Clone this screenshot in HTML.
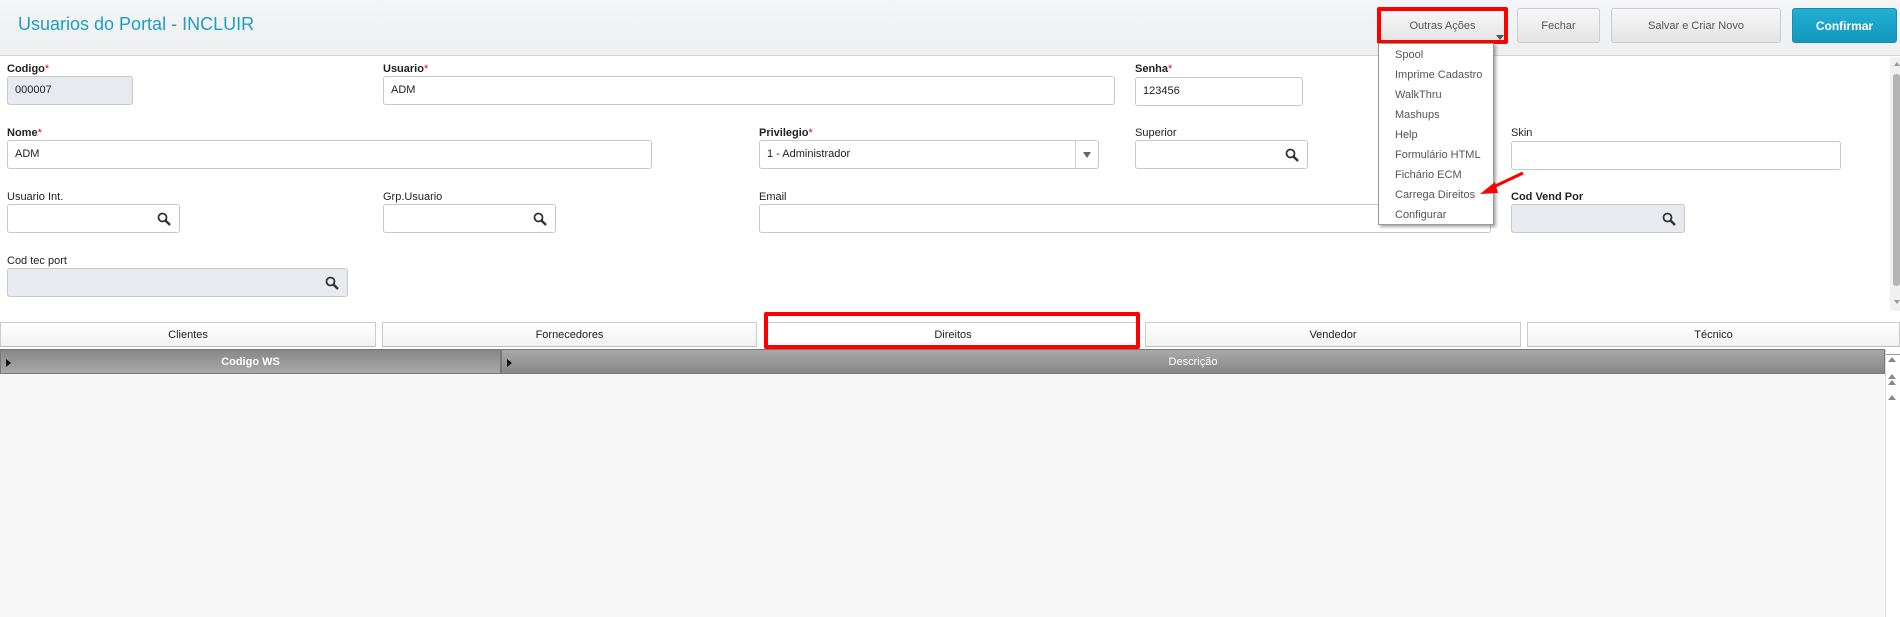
<!DOCTYPE html>
<html><head><meta charset="utf-8"><style>
*{box-sizing:border-box;margin:0;padding:0}
body{width:1900px;height:617px;overflow:hidden;background:#fff;font-family:"Liberation Sans",Arial,sans-serif;font-size:11px;color:#222;position:relative}
.a{position:absolute}
.hdr{left:0;top:0;width:1900px;height:56px;background:linear-gradient(#f4f5f6,#eeeff0);border-bottom:1px solid #d5d5d5}
.title{left:18px;top:14px;font-size:18px;color:#1b9ec4}
.btn{top:8px;height:35px;border:1px solid #ccc;border-radius:3px;background:linear-gradient(#f7f7f7,#e4e4e4);color:#555;font-size:11px;display:flex;align-items:center;justify-content:center}
.lbl{font-size:11px;color:#222}
.lbl b{font-weight:bold}
.lbl i{color:#e00;font-style:normal}
.in{height:29px;border:1px solid #c8c8c8;border-radius:3px;background:#fff;padding-left:7px;line-height:27px;font-size:11px}
.dis{background:#e8eaf0}
.srch{position:absolute;right:8px;top:7px;width:14px;height:14px}
.menu{left:1378px;top:43px;width:116px;height:182px;background:#fff;border:1px solid #999;box-shadow:2px 2px 3px rgba(0,0,0,.35)}
.menu div{position:absolute;left:16px;font-size:11px;color:#555}
.tab{top:322px;height:25px;border:1px solid #ccc;border-bottom-color:#bbb;background:linear-gradient(#fff,#f2f2f2);text-align:center;line-height:24px;font-size:11px;color:#222}
.gh{top:349px;height:25px;color:#fff;font-size:11px;line-height:25px;text-align:center;border:1px solid #777}
.tri{position:absolute;left:5px;top:9px;width:0;height:0;border-left:5px solid #111;border-top:4px solid transparent;border-bottom:4px solid transparent}
</style></head><body>
<div class="a hdr"></div>
<div class="a title">Usuarios do Portal - INCLUIR</div>
<div class="a btn" style="left:1379px;width:127px">Outras Ações</div>
<div class="a" style="left:1496px;top:35px;width:0;height:0;border-left:4px solid transparent;border-right:4px solid transparent;border-top:5px solid #555"></div>
<div class="a" style="left:1377px;top:7px;width:131px;height:37px;border:4px solid #f00;border-radius:2px"></div>
<div class="a btn" style="left:1517px;width:83px">Fechar</div>
<div class="a btn" style="left:1611px;width:170px">Salvar e Criar Novo</div>
<div class="a btn" style="left:1792px;width:105px;background:linear-gradient(#22aed4,#1597bd);border-color:#1590b5;color:#fff;font-weight:bold;font-size:12px">Confirmar</div>

<div class="a lbl" style="left:7px;top:63px"><b>Codigo</b><i>*</i></div>
<div class="a in dis" style="left:7px;top:76px;width:126px">000007</div>
<div class="a lbl" style="left:383px;top:63px"><b>Usuario</b><i>*</i></div>
<div class="a in" style="left:383px;top:76px;width:732px">ADM</div>
<div class="a lbl" style="left:1135px;top:63px"><b>Senha</b><i>*</i></div>
<div class="a in" style="left:1135px;top:77px;width:168px">123456</div>

<div class="a lbl" style="left:7px;top:127px"><b>Nome</b><i>*</i></div>
<div class="a in" style="left:7px;top:140px;width:645px">ADM</div>
<div class="a lbl" style="left:759px;top:127px"><b>Privilegio</b><i>*</i></div>
<div class="a in" style="left:759px;top:140px;width:340px">1 - Administrador<div style="position:absolute;right:0;top:0;width:23px;height:27px;border-left:1px solid #ccc"><div style="position:absolute;left:7px;top:11px;border-left:4px solid transparent;border-right:4px solid transparent;border-top:6px solid #666"></div></div></div>
<div class="a lbl" style="left:1135px;top:127px">Superior</div>
<div class="a in" style="left:1135px;top:140px;width:173px"><svg class="srch" viewBox="0 0 14 14"><circle cx="5.5" cy="5.5" r="4" fill="none" stroke="#333" stroke-width="1.8"/><path d="M8.5 8.5L13 13" stroke="#333" stroke-width="2.4"/></svg></div>
<div class="a lbl" style="left:1511px;top:127px">Skin</div>
<div class="a in" style="left:1511px;top:141px;width:330px"></div>

<div class="a lbl" style="left:7px;top:191px">Usuario Int.</div>
<div class="a in" style="left:7px;top:204px;width:173px"><svg class="srch" viewBox="0 0 14 14"><circle cx="5.5" cy="5.5" r="4" fill="none" stroke="#333" stroke-width="1.8"/><path d="M8.5 8.5L13 13" stroke="#333" stroke-width="2.4"/></svg></div>
<div class="a lbl" style="left:383px;top:191px">Grp.Usuario</div>
<div class="a in" style="left:383px;top:204px;width:173px"><svg class="srch" viewBox="0 0 14 14"><circle cx="5.5" cy="5.5" r="4" fill="none" stroke="#333" stroke-width="1.8"/><path d="M8.5 8.5L13 13" stroke="#333" stroke-width="2.4"/></svg></div>
<div class="a lbl" style="left:759px;top:191px">Email</div>
<div class="a in" style="left:759px;top:204px;width:732px"></div>
<div class="a lbl" style="left:1511px;top:191px"><b>Cod Vend Por</b></div>
<div class="a in dis" style="left:1511px;top:204px;width:174px"><svg class="srch" viewBox="0 0 14 14"><circle cx="5.5" cy="5.5" r="4" fill="none" stroke="#333" stroke-width="1.8"/><path d="M8.5 8.5L13 13" stroke="#333" stroke-width="2.4"/></svg></div>

<div class="a lbl" style="left:7px;top:255px">Cod tec port</div>
<div class="a in dis" style="left:7px;top:268px;width:341px"><svg class="srch" viewBox="0 0 14 14"><circle cx="5.5" cy="5.5" r="4" fill="none" stroke="#333" stroke-width="1.8"/><path d="M8.5 8.5L13 13" stroke="#333" stroke-width="2.4"/></svg></div>

<div class="a" style="left:1890px;top:57px;width:10px;height:254px;background:#f0f0f0"></div>
<div class="a" style="left:1893px;top:74px;width:7px;height:212px;background:#b4b4b4;border-radius:3px"></div>
<div class="a" style="left:1894px;top:62px;border-left:3px solid transparent;border-right:3px solid transparent;border-bottom:4px solid #999"></div>
<div class="a" style="left:1894px;top:300px;border-left:3px solid transparent;border-right:3px solid transparent;border-top:4px solid #999"></div>

<div class="a menu">
<div style="top:5px">Spool</div><div style="top:25px">Imprime Cadastro</div><div style="top:45px">WalkThru</div><div style="top:65px">Mashups</div><div style="top:85px">Help</div><div style="top:105px">Formulário HTML</div><div style="top:125px">Fichário ECM</div><div style="top:145px">Carrega Direitos</div><div style="top:165px">Configurar</div>
</div>
<svg class="a" style="left:1475px;top:165px" width="55" height="35"><path d="M48 8L14 24" stroke="#f00" stroke-width="3"/><path d="M5 29L20 17L23 28Z" fill="#f00"/></svg>

<div class="a tab" style="left:0;width:376px">Clientes</div>
<div class="a tab" style="left:382px;width:375px">Fornecedores</div>
<div class="a tab" style="left:766px;width:374px;background:#fff">Direitos</div>
<div class="a" style="left:764px;top:312px;width:376px;height:37px;border:4px solid #f00;border-radius:2px"></div>
<div class="a tab" style="left:1145px;width:376px">Vendedor</div>
<div class="a tab" style="left:1527px;width:373px">Técnico</div>

<div class="a" style="left:0;top:374px;width:1884px;height:243px;background:#f7f7f7"></div>
<div class="a gh" style="left:0;width:501px;background:linear-gradient(#878787,#a8a8a8);font-weight:bold"><span class="tri"></span>Codigo WS</div>
<div class="a gh" style="left:501px;width:1384px;background:linear-gradient(#a9a9a9,#878787)"><span class="tri"></span>Descrição</div>
<div class="a" style="left:1885px;top:349px;width:15px;height:268px;background:#fff;border-left:1px solid #ddd"></div>
<div class="a" style="left:1886px;top:354px;width:14px;height:1px;background:#999"></div>
<div class="a" style="left:1888px;top:357px;border-left:4px solid transparent;border-right:4px solid transparent;border-bottom:5px solid #888"></div>
<div class="a" style="left:1888px;top:374px;border-left:4px solid transparent;border-right:4px solid transparent;border-bottom:5px solid #888"></div>
<div class="a" style="left:1888px;top:380px;border-left:4px solid transparent;border-right:4px solid transparent;border-bottom:5px solid #888"></div>
<div class="a" style="left:1888px;top:395px;border-left:4px solid transparent;border-right:4px solid transparent;border-bottom:5px solid #888"></div>
</body></html>
